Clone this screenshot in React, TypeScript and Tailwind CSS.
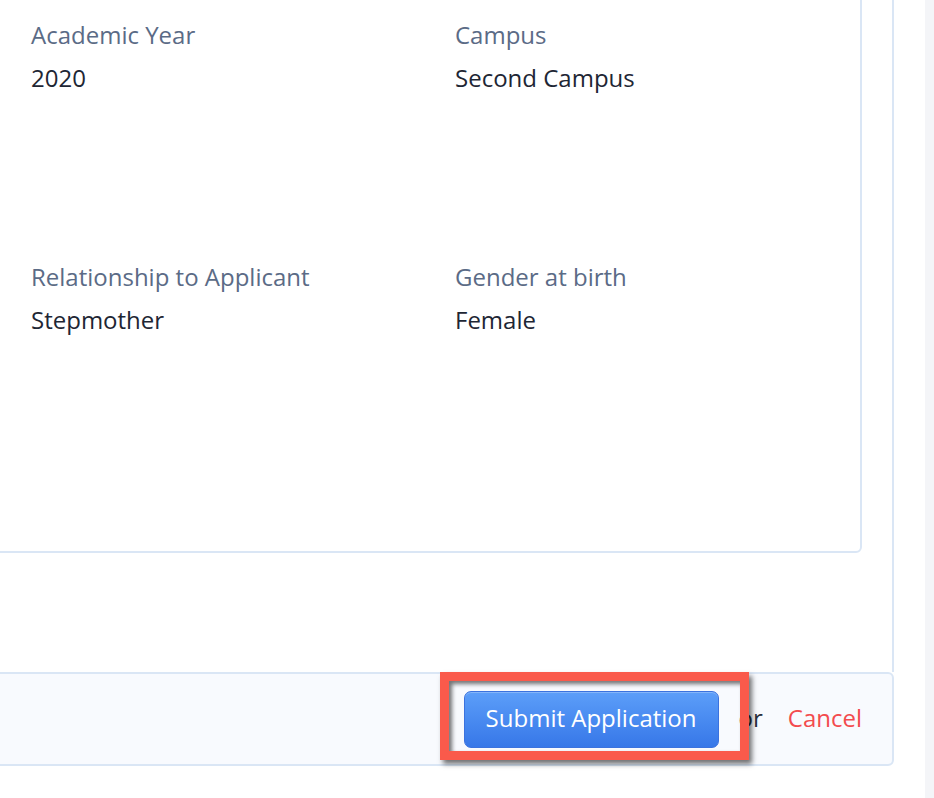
import React from "react";

const font = { fontFamily: '"Open Sans", "Noto Sans", sans-serif' };

function Field({ label, value }: { label: string; value: string }) {
  return (
    <div className="flex h-[242px] flex-col">
      <div className="text-[24px] leading-[36px] text-[#5b6b86]">{label}</div>
      <div className="mt-[7px] text-[24px] leading-[36px] text-[#1e2634]">{value}</div>
    </div>
  );
}

export default function App() {
  return (
    <div className="relative flex h-[798px] w-[934px] overflow-hidden bg-white" style={font}>
      <div className="flex w-[925px] flex-col">
        <div className="-ml-[10px] -mt-[20px] w-[904px] border-x-2 border-[#dae6f5] pb-[119px] pt-[10px]">
          <div className="mr-[30px] rounded-md border-2 border-[#dae6f5] pb-[50px] pl-[37px] pt-[25px]">
            <div className="grid grid-cols-[424px_1fr]">
              <Field label="Academic Year" value="2020" />
              <Field label="Campus" value="Second Campus" />
              <Field label="Relationship to Applicant" value="Stepmother" />
              <Field label="Gender at birth" value="Female" />
            </div>
          </div>
        </div>
        <div className="-ml-[10px] flex h-[94px] w-[904px] items-center justify-end rounded-md border-2 border-[#dae6f5] bg-[#f8fafe] pr-[30px]">
          <button className="flex h-[57px] w-[255px] items-center justify-center rounded-[7px] border border-[#3b72de] bg-gradient-to-b from-[#5c9ef9] to-[#3777e8] pb-[2px] text-[24px] text-white shadow-[inset_0_1px_0_rgba(255,255,255,0.25)]">
            Submit Application
          </button>
          <span className="ml-[20px] pb-[2px] text-[24px] leading-[36px] text-[#2a2f3b]">or</span>
          <span className="ml-[25px] pb-[2px] text-[24px] leading-[36px] text-[#f34b4e]">Cancel</span>
        </div>
      </div>
      <div className="w-[9px] bg-[#f4f5f8]" />
      <div className="absolute left-[440px] top-[672px] h-[88px] w-[309px] border-[9px] border-[#fa5a4b] shadow-[3px_4px_5px_rgba(0,0,0,0.55),inset_3px_3px_4px_rgba(0,0,0,0.55)]" />
    </div>
  );
}
